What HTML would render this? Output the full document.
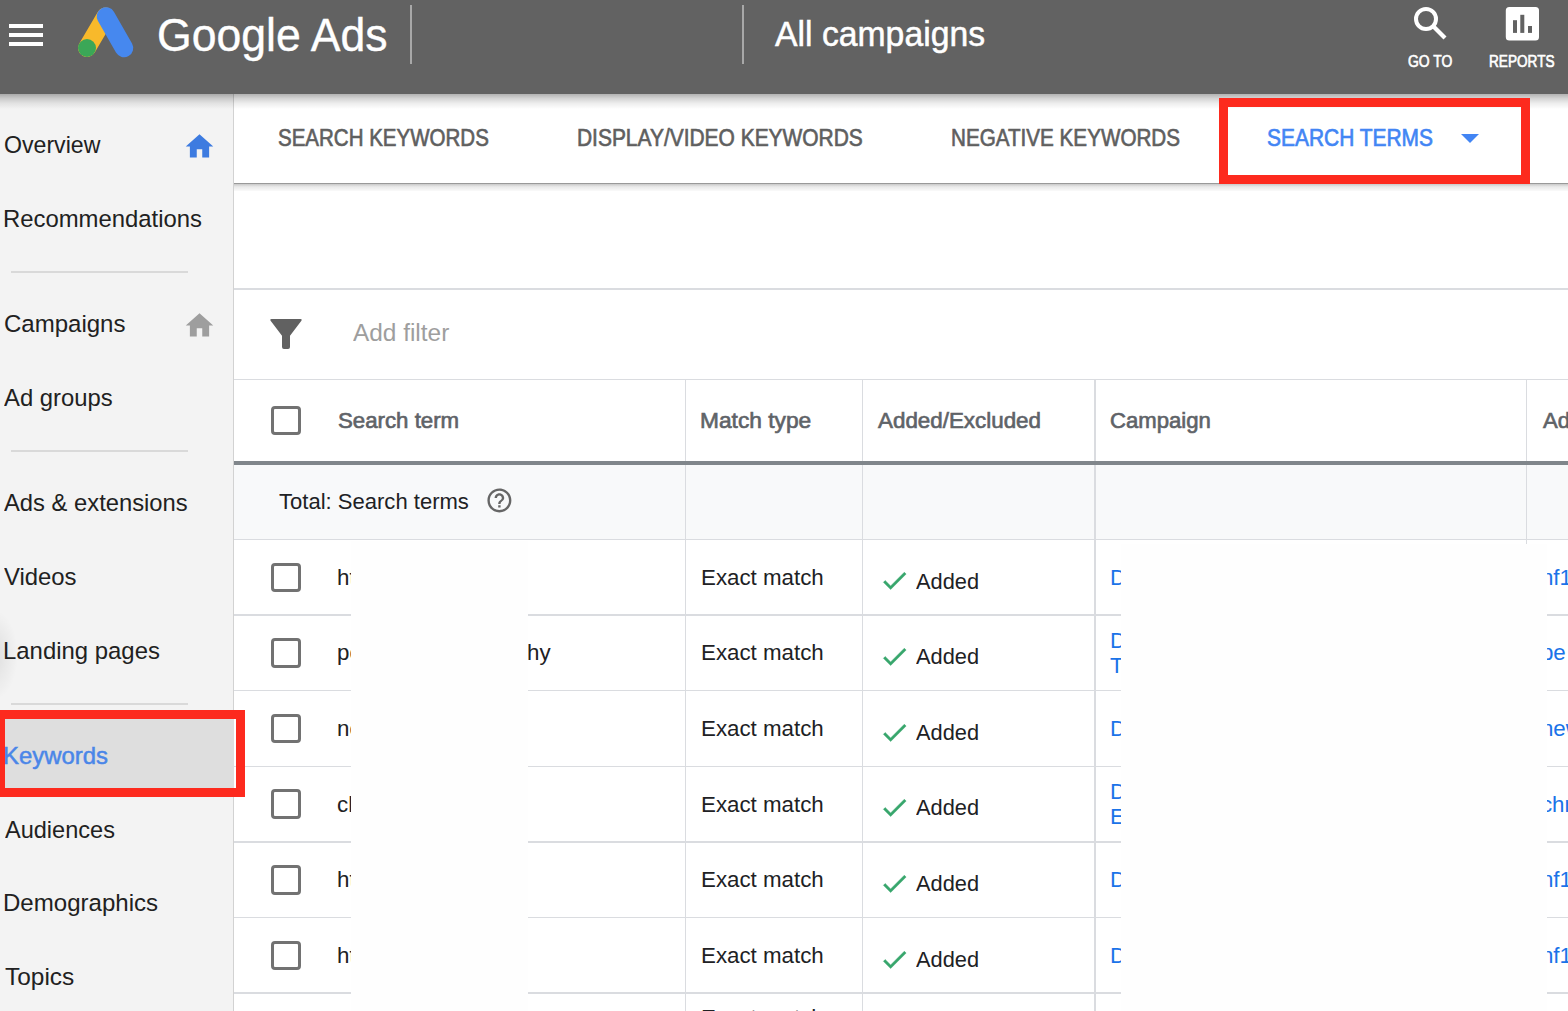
<!DOCTYPE html>
<html><head><meta charset="utf-8"><style>
html,body{margin:0;padding:0;width:1568px;height:1011px;overflow:hidden;background:#fff;}
body{position:relative;font-family:"Liberation Sans",sans-serif;}
.t{position:absolute;white-space:nowrap;}
.r{position:absolute;}
svg{position:absolute;overflow:visible;}
</style></head><body>
<div class="r" style="left:234px;top:93px;width:1334px;height:90px;background:#ffffff;"></div>
<div class="r" style="left:234px;top:183px;width:1334px;height:1px;background:#999999;"></div>
<div class="r" style="left:234px;top:184px;width:1334px;height:7px;background:linear-gradient(#c9c9c9,#e9e9e9 40%,#fafafa);"></div>
<div class="r" style="left:234px;top:288px;width:1334px;height:1.5px;background:#dadce0;"></div>
<div class="r" style="left:234px;top:378.5px;width:1334px;height:1.5px;background:#dadce0;"></div>
<div class="r" style="left:684.7px;top:379px;width:1.5px;height:632px;background:#dadce0;"></div>
<div class="r" style="left:861.7px;top:379px;width:1.5px;height:632px;background:#dadce0;"></div>
<div class="r" style="left:1094.2px;top:379px;width:1.5px;height:632px;background:#dadce0;"></div>
<div class="r" style="left:1525.8px;top:379px;width:1.5px;height:632px;background:#dadce0;"></div>
<div class="r" style="left:234px;top:461px;width:1334px;height:4px;background:#80868b;"></div>
<div class="r" style="left:234px;top:465px;width:1334px;height:74px;background:#f8f9fa;"></div>
<div class="r" style="left:684.7px;top:465px;width:1.5px;height:74px;background:#dadce0;"></div>
<div class="r" style="left:861.7px;top:465px;width:1.5px;height:74px;background:#dadce0;"></div>
<div class="r" style="left:1094.2px;top:465px;width:1.5px;height:74px;background:#dadce0;"></div>
<div class="r" style="left:1525.8px;top:465px;width:1.5px;height:74px;background:#dadce0;"></div>
<div class="r" style="left:234px;top:538.5px;width:1334px;height:1.5px;background:#dadce0;"></div>
<div class="r" style="left:234px;top:614.33px;width:1334px;height:1.5px;background:#dadce0;"></div>
<div class="r" style="left:234px;top:689.96px;width:1334px;height:1.5px;background:#dadce0;"></div>
<div class="r" style="left:234px;top:765.59px;width:1334px;height:1.5px;background:#dadce0;"></div>
<div class="r" style="left:234px;top:841.22px;width:1334px;height:1.5px;background:#dadce0;"></div>
<div class="r" style="left:234px;top:916.85px;width:1334px;height:1.5px;background:#dadce0;"></div>
<div class="r" style="left:234px;top:992.48px;width:1334px;height:1.5px;background:#dadce0;"></div>
<div class="r" style="left:271.2px;top:405.8px;width:29.6px;height:29.6px;background:transparent;box-sizing:border-box;border:3.4px solid #727272;border-radius:4px;"></div>
<div class="t" style="left:337.50px;top:409.70px;font-size:22.2px;line-height:22.2px;color:#5f6368;font-weight:normal;transform:scaleX(1.0025);transform-origin:0 0;-webkit-text-stroke:0.65px currentColor;">Search term</div>
<div class="t" style="left:700.45px;top:409.60px;font-size:22.2px;line-height:22.2px;color:#5f6368;font-weight:normal;transform:scaleX(1.0245);transform-origin:0 0;-webkit-text-stroke:0.65px currentColor;">Match type</div>
<div class="t" style="left:878.30px;top:409.80px;font-size:22.2px;line-height:22.2px;color:#5f6368;font-weight:normal;transform:scaleX(1.0088);transform-origin:0 0;-webkit-text-stroke:0.65px currentColor;">Added/Excluded</div>
<div class="t" style="left:1110.30px;top:409.50px;font-size:22.2px;line-height:22.2px;color:#5f6368;font-weight:normal;transform:scaleX(0.997);transform-origin:0 0;-webkit-text-stroke:0.65px currentColor;">Campaign</div>
<div class="t" style="left:1542.70px;top:409.50px;font-size:22.2px;line-height:22.2px;color:#5f6368;font-weight:normal;transform:scaleX(0.997);transform-origin:0 0;-webkit-text-stroke:0.65px currentColor;">Ad group</div>
<div class="t" style="left:279.10px;top:490.80px;font-size:22.3px;line-height:22.3px;color:#202124;font-weight:normal;transform:scaleX(0.9885);transform-origin:0 0;">Total: Search terms</div>
<svg style="left:484.6px;top:485.6px" width="28.8" height="28.8" viewBox="0 0 24 24"><path fill="#666" d="M11 18h2v-2h-2v2zm1-16C6.48 2 2 6.48 2 12s4.48 10 10 10 10-4.48 10-10S17.52 2 12 2zm0 18c-4.41 0-8-3.59-8-8s3.59-8 8-8 8 3.59 8 8-3.59 8-8 8zm0-14c-2.21 0-4 1.79-4 4h2c0-1.1.9-2 2-2s2 .9 2 2c0 2-3 1.75-3 5h2c0-2.25 3-2.5 3-5 0-2.21-1.79-4-4-4z"/></svg>
<div class="r" style="left:271.2px;top:562.5px;width:29.6px;height:29.6px;background:transparent;box-sizing:border-box;border:3.4px solid #727272;border-radius:4px;"></div>
<div class="t" style="left:336.60px;top:566.70px;font-size:22.3px;line-height:22.3px;color:#202124;font-weight:normal;transform:scaleX(1.0008);transform-origin:0 0;">ht</div>
<div class="t" style="left:700.90px;top:566.70px;font-size:22.3px;line-height:22.3px;color:#202124;font-weight:normal;transform:scaleX(1.0008);transform-origin:0 0;">Exact match</div>
<svg style="left:879px;top:565.40px" width="31" height="31" viewBox="0 0 24 24"><path fill="#37a66c" stroke="#37a66c" stroke-width="0.35" d="M9 16.2L4.8 12l-1.4 1.4L9 19 21 7l-1.4-1.4L9 16.2z"/></svg>
<div class="t" style="left:915.60px;top:570.50px;font-size:22.3px;line-height:22.3px;color:#202124;font-weight:normal;transform:scaleX(0.9778);transform-origin:0 0;">Added</div>
<div class="t" style="left:1110.10px;top:566.70px;font-size:22.3px;line-height:22.3px;color:#1a73e8;font-weight:normal;transform:scaleX(1.0008);transform-origin:0 0;">D</div>
<div class="t" style="left:1536.00px;top:566.70px;font-size:22.3px;line-height:22.3px;color:#1a73e8;font-weight:normal;transform:scaleX(1.0008);transform-origin:0 0;">inf1</div>
<div class="r" style="left:271.2px;top:638.13px;width:29.6px;height:29.6px;background:transparent;box-sizing:border-box;border:3.4px solid #727272;border-radius:4px;"></div>
<div class="t" style="left:336.60px;top:642.33px;font-size:22.3px;line-height:22.3px;color:#202124;font-weight:normal;transform:scaleX(1.0008);transform-origin:0 0;">pe</div>
<div class="t" style="left:700.90px;top:642.33px;font-size:22.3px;line-height:22.3px;color:#202124;font-weight:normal;transform:scaleX(1.0008);transform-origin:0 0;">Exact match</div>
<svg style="left:879px;top:641.03px" width="31" height="31" viewBox="0 0 24 24"><path fill="#37a66c" stroke="#37a66c" stroke-width="0.35" d="M9 16.2L4.8 12l-1.4 1.4L9 19 21 7l-1.4-1.4L9 16.2z"/></svg>
<div class="t" style="left:915.60px;top:646.13px;font-size:22.3px;line-height:22.3px;color:#202124;font-weight:normal;transform:scaleX(0.9778);transform-origin:0 0;">Added</div>
<div class="t" style="left:1110.10px;top:629.53px;font-size:22.3px;line-height:22.3px;color:#1a73e8;font-weight:normal;transform:scaleX(1.0008);transform-origin:0 0;">D</div>
<div class="t" style="left:1110.10px;top:655.13px;font-size:22.3px;line-height:22.3px;color:#1a73e8;font-weight:normal;transform:scaleX(1.0008);transform-origin:0 0;">T</div>
<div class="t" style="left:1536.00px;top:642.33px;font-size:22.3px;line-height:22.3px;color:#1a73e8;font-weight:normal;transform:scaleX(1.0008);transform-origin:0 0;">ipe</div>
<div class="r" style="left:271.2px;top:713.76px;width:29.6px;height:29.6px;background:transparent;box-sizing:border-box;border:3.4px solid #727272;border-radius:4px;"></div>
<div class="t" style="left:336.60px;top:717.96px;font-size:22.3px;line-height:22.3px;color:#202124;font-weight:normal;transform:scaleX(1.0008);transform-origin:0 0;">ne</div>
<div class="t" style="left:700.90px;top:717.96px;font-size:22.3px;line-height:22.3px;color:#202124;font-weight:normal;transform:scaleX(1.0008);transform-origin:0 0;">Exact match</div>
<svg style="left:879px;top:716.66px" width="31" height="31" viewBox="0 0 24 24"><path fill="#37a66c" stroke="#37a66c" stroke-width="0.35" d="M9 16.2L4.8 12l-1.4 1.4L9 19 21 7l-1.4-1.4L9 16.2z"/></svg>
<div class="t" style="left:915.60px;top:721.76px;font-size:22.3px;line-height:22.3px;color:#202124;font-weight:normal;transform:scaleX(0.9778);transform-origin:0 0;">Added</div>
<div class="t" style="left:1110.10px;top:717.96px;font-size:22.3px;line-height:22.3px;color:#1a73e8;font-weight:normal;transform:scaleX(1.0008);transform-origin:0 0;">D</div>
<div class="t" style="left:1536.00px;top:717.96px;font-size:22.3px;line-height:22.3px;color:#1a73e8;font-weight:normal;transform:scaleX(1.0008);transform-origin:0 0;">inew</div>
<div class="r" style="left:271.2px;top:789.39px;width:29.6px;height:29.6px;background:transparent;box-sizing:border-box;border:3.4px solid #727272;border-radius:4px;"></div>
<div class="t" style="left:336.60px;top:793.59px;font-size:22.3px;line-height:22.3px;color:#202124;font-weight:normal;transform:scaleX(1.0008);transform-origin:0 0;">cl</div>
<div class="t" style="left:700.90px;top:793.59px;font-size:22.3px;line-height:22.3px;color:#202124;font-weight:normal;transform:scaleX(1.0008);transform-origin:0 0;">Exact match</div>
<svg style="left:879px;top:792.29px" width="31" height="31" viewBox="0 0 24 24"><path fill="#37a66c" stroke="#37a66c" stroke-width="0.35" d="M9 16.2L4.8 12l-1.4 1.4L9 19 21 7l-1.4-1.4L9 16.2z"/></svg>
<div class="t" style="left:915.60px;top:797.39px;font-size:22.3px;line-height:22.3px;color:#202124;font-weight:normal;transform:scaleX(0.9778);transform-origin:0 0;">Added</div>
<div class="t" style="left:1110.10px;top:780.79px;font-size:22.3px;line-height:22.3px;color:#1a73e8;font-weight:normal;transform:scaleX(1.0008);transform-origin:0 0;">D</div>
<div class="t" style="left:1110.10px;top:806.39px;font-size:22.3px;line-height:22.3px;color:#1a73e8;font-weight:normal;transform:scaleX(1.0008);transform-origin:0 0;">E</div>
<div class="t" style="left:1536.00px;top:793.59px;font-size:22.3px;line-height:22.3px;color:#1a73e8;font-weight:normal;transform:scaleX(1.0008);transform-origin:0 0;">ichr</div>
<div class="r" style="left:271.2px;top:865.02px;width:29.6px;height:29.6px;background:transparent;box-sizing:border-box;border:3.4px solid #727272;border-radius:4px;"></div>
<div class="t" style="left:336.60px;top:869.22px;font-size:22.3px;line-height:22.3px;color:#202124;font-weight:normal;transform:scaleX(1.0008);transform-origin:0 0;">ht</div>
<div class="t" style="left:700.90px;top:869.22px;font-size:22.3px;line-height:22.3px;color:#202124;font-weight:normal;transform:scaleX(1.0008);transform-origin:0 0;">Exact match</div>
<svg style="left:879px;top:867.92px" width="31" height="31" viewBox="0 0 24 24"><path fill="#37a66c" stroke="#37a66c" stroke-width="0.35" d="M9 16.2L4.8 12l-1.4 1.4L9 19 21 7l-1.4-1.4L9 16.2z"/></svg>
<div class="t" style="left:915.60px;top:873.02px;font-size:22.3px;line-height:22.3px;color:#202124;font-weight:normal;transform:scaleX(0.9778);transform-origin:0 0;">Added</div>
<div class="t" style="left:1110.10px;top:869.22px;font-size:22.3px;line-height:22.3px;color:#1a73e8;font-weight:normal;transform:scaleX(1.0008);transform-origin:0 0;">D</div>
<div class="t" style="left:1536.00px;top:869.22px;font-size:22.3px;line-height:22.3px;color:#1a73e8;font-weight:normal;transform:scaleX(1.0008);transform-origin:0 0;">inf1</div>
<div class="r" style="left:271.2px;top:940.65px;width:29.6px;height:29.6px;background:transparent;box-sizing:border-box;border:3.4px solid #727272;border-radius:4px;"></div>
<div class="t" style="left:336.60px;top:944.85px;font-size:22.3px;line-height:22.3px;color:#202124;font-weight:normal;transform:scaleX(1.0008);transform-origin:0 0;">ht</div>
<div class="t" style="left:700.90px;top:944.85px;font-size:22.3px;line-height:22.3px;color:#202124;font-weight:normal;transform:scaleX(1.0008);transform-origin:0 0;">Exact match</div>
<svg style="left:879px;top:943.55px" width="31" height="31" viewBox="0 0 24 24"><path fill="#37a66c" stroke="#37a66c" stroke-width="0.35" d="M9 16.2L4.8 12l-1.4 1.4L9 19 21 7l-1.4-1.4L9 16.2z"/></svg>
<div class="t" style="left:915.60px;top:948.65px;font-size:22.3px;line-height:22.3px;color:#202124;font-weight:normal;transform:scaleX(0.9778);transform-origin:0 0;">Added</div>
<div class="t" style="left:1110.10px;top:944.85px;font-size:22.3px;line-height:22.3px;color:#1a73e8;font-weight:normal;transform:scaleX(1.0008);transform-origin:0 0;">D</div>
<div class="t" style="left:1536.00px;top:944.85px;font-size:22.3px;line-height:22.3px;color:#1a73e8;font-weight:normal;transform:scaleX(1.0008);transform-origin:0 0;">inf1</div>
<div class="r" style="left:271.2px;top:1016.28px;width:29.6px;height:29.6px;background:transparent;box-sizing:border-box;border:3.4px solid #727272;border-radius:4px;"></div>
<div class="t" style="left:336.60px;top:1020.48px;font-size:22.3px;line-height:22.3px;color:#202124;font-weight:normal;transform:scaleX(1.0008);transform-origin:0 0;">ex</div>
<div class="t" style="left:700.90px;top:1007.20px;font-size:22.3px;line-height:22.3px;color:#202124;font-weight:normal;transform:scaleX(1.0008);transform-origin:0 0;">Exact match</div>
<svg style="left:879px;top:1019.18px" width="31" height="31" viewBox="0 0 24 24"><path fill="#37a66c" stroke="#37a66c" stroke-width="0.35" d="M9 16.2L4.8 12l-1.4 1.4L9 19 21 7l-1.4-1.4L9 16.2z"/></svg>
<div class="t" style="left:915.60px;top:1024.28px;font-size:22.3px;line-height:22.3px;color:#202124;font-weight:normal;transform:scaleX(0.9778);transform-origin:0 0;">Added</div>
<div class="t" style="left:1110.10px;top:1020.48px;font-size:22.3px;line-height:22.3px;color:#1a73e8;font-weight:normal;transform:scaleX(1.0008);transform-origin:0 0;">D</div>
<div class="t" style="left:1536.00px;top:1020.48px;font-size:22.3px;line-height:22.3px;color:#1a73e8;font-weight:normal;transform:scaleX(1.0008);transform-origin:0 0;">inf1</div>
<div class="t" style="left:527.00px;top:642.33px;font-size:22.3px;line-height:22.3px;color:#202124;font-weight:normal;transform:scaleX(1.0008);transform-origin:0 0;">hy</div>
<div class="r" style="left:351px;top:540.5px;width:177px;height:470.5px;background:#fefefe;"></div>
<div class="r" style="left:1120.8px;top:544px;width:426.2px;height:467px;background:#fefefe;"></div>
<svg style="left:268px;top:316px" width="36" height="36" viewBox="0 0 36 36"><path fill="#616161" d="M3.5 3 H32.5 Q34.5 3 33.2 5 L22 19.8 V31 Q22 33 20 33 H16 Q14 33 14 31 V19.8 L2.8 5 Q1.5 3 3.5 3 Z"/></svg>
<div class="t" style="left:352.70px;top:321.00px;font-size:24.2px;line-height:24.2px;color:#9e9e9e;font-weight:normal;transform:scaleX(1.0084);transform-origin:0 0;">Add filter</div>
<div class="r" style="left:0px;top:93px;width:233px;height:918px;background:#f3f3f3;"></div>
<div class="r" style="left:232.8px;top:93px;width:1.2px;height:918px;background:#d2d2d2;"></div>
<div class="r" style="left:11px;top:271px;width:177px;height:2px;background:#d9d9d9;"></div>
<div class="r" style="left:11px;top:450px;width:177px;height:2px;background:#d9d9d9;"></div>
<div class="r" style="left:11px;top:703px;width:177px;height:2px;background:#d9d9d9;"></div>
<div class="r" style="left:0px;top:712px;width:234px;height:84px;background:#dedede;"></div>
<div class="r" style="left:-30px;top:610px;width:48px;height:90px;background:radial-gradient(closest-side, rgba(0,0,0,0.09), rgba(0,0,0,0.04) 55%, rgba(0,0,0,0));"></div>
<div class="t" style="left:4.06px;top:133.20px;font-size:24.5px;line-height:24.5px;color:#212121;font-weight:normal;transform:scaleX(0.9436);transform-origin:0 0;">Overview</div>
<div class="t" style="left:2.65px;top:206.80px;font-size:24.5px;line-height:24.5px;color:#212121;font-weight:normal;transform:scaleX(0.9743);transform-origin:0 0;">Recommendations</div>
<div class="t" style="left:3.52px;top:312.00px;font-size:24.5px;line-height:24.5px;color:#212121;font-weight:normal;transform:scaleX(0.9803);transform-origin:0 0;">Campaigns</div>
<div class="t" style="left:4.20px;top:385.70px;font-size:24.5px;line-height:24.5px;color:#212121;font-weight:normal;transform:scaleX(0.973);transform-origin:0 0;">Ad groups</div>
<div class="t" style="left:3.80px;top:490.80px;font-size:24.5px;line-height:24.5px;color:#212121;font-weight:normal;transform:scaleX(0.9704);transform-origin:0 0;">Ads &amp; extensions</div>
<div class="t" style="left:4.10px;top:565.00px;font-size:24.5px;line-height:24.5px;color:#212121;font-weight:normal;transform:scaleX(0.9743);transform-origin:0 0;">Videos</div>
<div class="t" style="left:2.95px;top:639.00px;font-size:24.5px;line-height:24.5px;color:#212121;font-weight:normal;transform:scaleX(0.9759);transform-origin:0 0;">Landing pages</div>
<div class="t" style="left:4.70px;top:817.80px;font-size:24.5px;line-height:24.5px;color:#212121;font-weight:normal;transform:scaleX(0.9605);transform-origin:0 0;">Audiences</div>
<div class="t" style="left:2.74px;top:891.40px;font-size:24.5px;line-height:24.5px;color:#212121;font-weight:normal;transform:scaleX(0.9819);transform-origin:0 0;">Demographics</div>
<div class="t" style="left:4.50px;top:965.10px;font-size:24.5px;line-height:24.5px;color:#212121;font-weight:normal;transform:scaleX(0.9971);transform-origin:0 0;">Topics</div>
<div class="t" style="left:3.15px;top:743.80px;font-size:24.5px;line-height:24.5px;color:#4a86e8;font-weight:normal;transform:scaleX(0.9762);transform-origin:0 0;-webkit-text-stroke:0.5px currentColor;">Keywords</div>
<svg style="left:182.6px;top:129.6px" width="33" height="33" viewBox="0 0 24 24"><path fill="#3d7be0" d="M10 20v-6h4v6h5v-8h3L12 3 2 12h3v8z"/></svg>
<svg style="left:182.6px;top:308.9px" width="33" height="33" viewBox="0 0 24 24"><path fill="#9e9e9e" d="M10 20v-6h4v6h5v-8h3L12 3 2 12h3v8z"/></svg>
<div class="t" style="left:278.31px;top:126.70px;font-size:23px;line-height:23px;color:#5f5f5f;font-weight:normal;transform:scaleX(0.8919);transform-origin:0 0;-webkit-text-stroke:0.65px currentColor;">SEARCH KEYWORDS</div>
<div class="t" style="left:576.78px;top:126.50px;font-size:23px;line-height:23px;color:#5f5f5f;font-weight:normal;transform:scaleX(0.9103);transform-origin:0 0;-webkit-text-stroke:0.65px currentColor;">DISPLAY/VIDEO KEYWORDS</div>
<div class="t" style="left:951.30px;top:126.50px;font-size:23px;line-height:23px;color:#5f5f5f;font-weight:normal;transform:scaleX(0.8976);transform-origin:0 0;-webkit-text-stroke:0.65px currentColor;">NEGATIVE KEYWORDS</div>
<div class="t" style="left:1267.09px;top:126.50px;font-size:23px;line-height:23px;color:#4285f4;font-weight:normal;transform:scaleX(0.9106);transform-origin:0 0;-webkit-text-stroke:0.65px currentColor;">SEARCH TERMS</div>
<svg style="left:1461px;top:134px" width="18" height="9" viewBox="0 0 18 9"><path fill="#4285f4" d="M0 0H18L9 9Z"/></svg>
<div class="r" style="left:0px;top:0px;width:1568px;height:93.6px;background:#626262;"></div>
<div class="r" style="left:0px;top:93.6px;width:1568px;height:15px;background:linear-gradient(rgba(0,0,0,0.30),rgba(0,0,0,0.17) 30%,rgba(0,0,0,0.07) 62%,rgba(0,0,0,0));"></div>
<div class="r" style="left:9px;top:24px;width:34px;height:4px;background:#ffffff;"></div>
<div class="r" style="left:9px;top:33px;width:34px;height:4px;background:#ffffff;"></div>
<div class="r" style="left:9px;top:42px;width:34px;height:4px;background:#ffffff;"></div>
<svg style="left:0;top:0" width="160" height="93" viewBox="0 0 160 93">
<line x1="105.5" y1="16.5" x2="87" y2="48" stroke="#f8b92b" stroke-width="18" stroke-linecap="round"/>
<line x1="106" y1="16.5" x2="124" y2="48" stroke="#4688ef" stroke-width="18.5" stroke-linecap="round"/>
<circle cx="87" cy="48" r="9" fill="#3ba757"/>
</svg>
<div class="t" style="left:157.40px;top:10.50px;font-size:47px;line-height:47px;color:#ffffff;font-weight:normal;transform:scaleX(0.9485);transform-origin:0 0;-webkit-text-stroke:0.4px #fff;">Google Ads</div>
<div class="r" style="left:410px;top:5px;width:1.5px;height:59px;background:#a8a8a8;"></div>
<div class="r" style="left:742px;top:5px;width:1.5px;height:59px;background:#a8a8a8;"></div>
<div class="t" style="left:774.80px;top:16.20px;font-size:35px;line-height:35px;color:#ffffff;font-weight:normal;transform:scaleX(0.9641);transform-origin:0 0;-webkit-text-stroke:0.5px #fff;">All campaigns</div>
<svg style="left:1400px;top:0" width="60" height="50" viewBox="0 0 60 50">
<circle cx="26" cy="19" r="10" fill="none" stroke="#fff" stroke-width="4"/>
<line x1="33" y1="26" x2="45" y2="38" stroke="#fff" stroke-width="4.2"/>
</svg>
<svg style="left:1500px;top:0" width="50" height="50" viewBox="0 0 50 50">
<rect x="5.8" y="7" width="33.2" height="33.5" rx="3.5" fill="#fff"/>
<rect x="13" y="20.2" width="4" height="12.7" fill="#626262"/>
<rect x="20.3" y="14.8" width="4" height="18.1" fill="#626262"/>
<rect x="28" y="26" width="4" height="6.9" fill="#626262"/>
</svg>
<div class="t" style="left:1407.82px;top:53.70px;font-size:15.8px;line-height:15.8px;color:#ffffff;font-weight:normal;transform:scaleX(0.8816);transform-origin:0 0;-webkit-text-stroke:0.65px currentColor;">GO TO</div>
<div class="t" style="left:1489.14px;top:53.70px;font-size:15.8px;line-height:15.8px;color:#ffffff;font-weight:normal;transform:scaleX(0.8613);transform-origin:0 0;-webkit-text-stroke:0.65px currentColor;">REPORTS</div>
<div class="r" style="left:1219px;top:98px;width:311px;height:86px;background:transparent;box-sizing:border-box;border:9px solid #fd2a1e;"></div>
<div class="r" style="left:-4.5px;top:710px;width:249.5px;height:87px;background:transparent;box-sizing:border-box;border:9px solid #fd2a1e;"></div>
</body></html>
